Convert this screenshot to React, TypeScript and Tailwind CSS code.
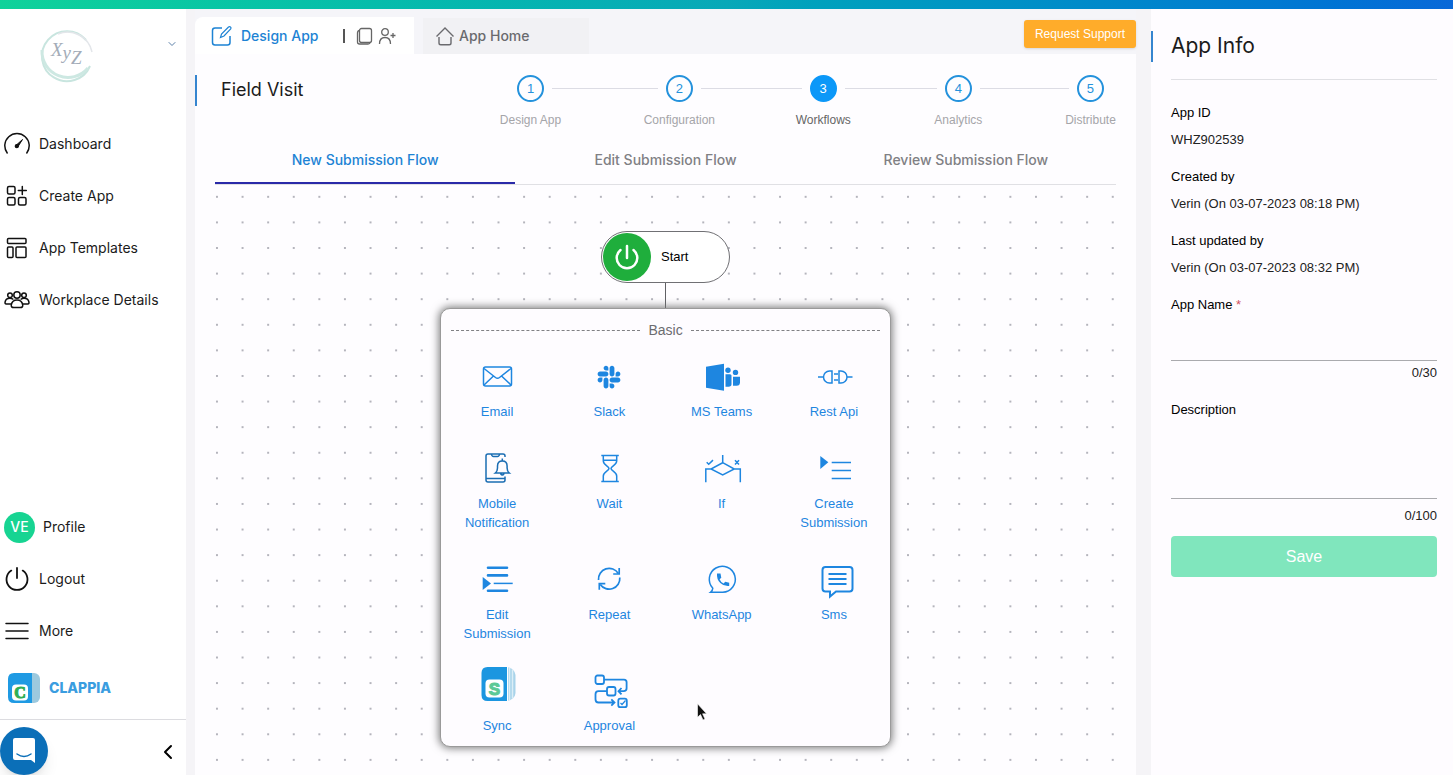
import clsx from "clsx";
import React, { useState } from "react";
import { FaSlack } from "react-icons/fa";
import { ChevronDown, ChevronLeft } from "lucide-react";

type IconProps = { children: React.ReactNode; className?: string };

// 40x40 line icon used in the workflow step picker
function StepIcon({ children, className }: IconProps) {
  return (
    <svg
      viewBox="0 0 40 40"
      fill="none"
      stroke="currentColor"
      strokeWidth="1.5"
      className={clsx("size-10 overflow-visible", className)}
    >
      {children}
    </svg>
  );
}

function NavIcon({ children }: IconProps) {
  return (
    <svg
      viewBox="0 0 26 26"
      fill="none"
      stroke="#111"
      strokeWidth="1.5"
      strokeLinecap="round"
      strokeLinejoin="round"
      className="size-[26px] shrink-0"
    >
      {children}
    </svg>
  );
}

const mainNav = [
  {
    label: "Dashboard",
    icon: (
      <NavIcon>
        <path d="M3.2 22A12.2 12.2 0 1 1 22.8 22" />
        <path d="M12.2 14.2 18.5 8.5 14 15.6z" fill="#111" strokeWidth="1" />
        <circle cx="12.8" cy="15.2" r="1.4" fill="#111" />
      </NavIcon>
    ),
  },
  {
    label: "Create App",
    icon: (
      <NavIcon>
        <rect x="3.5" y="3.5" width="7.5" height="7.5" rx="1.5" />
        <rect x="3.5" y="14.5" width="7.5" height="7.5" rx="1.5" />
        <rect x="14.5" y="14.5" width="7.5" height="7.5" rx="1.5" />
        <path d="M18.3 3.5v8M14.3 7.5h8" />
      </NavIcon>
    ),
  },
  {
    label: "App Templates",
    icon: (
      <NavIcon>
        <rect x="3.5" y="3.5" width="18.5" height="5" rx="1" />
        <rect x="3.5" y="12" width="5.5" height="10.5" rx="1" />
        <rect x="12" y="12" width="10" height="10.5" rx="1" />
      </NavIcon>
    ),
  },
  {
    label: "Workplace Details",
    icon: (
      <NavIcon>
        <circle cx="13" cy="8" r="3.2" />
        <circle cx="6" cy="8.3" r="2.3" />
        <circle cx="20" cy="8.3" r="2.3" />
        <path d="M9.8 20.5c-2 0-2.8-.8-2.5-2.6.5-3 2.4-4.9 5.7-4.9s5.2 1.9 5.7 4.9c.3 1.8-.5 2.6-2.5 2.6z" />
        <path d="M7 17H2.3c-1.3 0-1.4-.9-1.2-2 .4-2.4 2-3.7 4.9-3.7 1.2 0 2.1.3 2.9.8M19 17h4.7c1.3 0 1.4-.9 1.2-2-.4-2.4-2-3.7-4.9-3.7-1.2 0-2.1.3-2.9.8" />
      </NavIcon>
    ),
  },
];

const accountNav = [
  {
    label: "Logout",
    icon: (
      <NavIcon>
        <path d="M7.3 4.6A10.5 10.5 0 1 0 18.7 4.6M13 2v10" strokeWidth="1.8" />
      </NavIcon>
    ),
  },
  {
    label: "More",
    icon: (
      <NavIcon>
        <path d="M2 5.5h22M2 13h22M2 20.5h22" />
      </NavIcon>
    ),
  },
];

const stages = [
  { label: "Design App", line: "grow-[108]" },
  { label: "Configuration", line: "grow-[103]" },
  { label: "Workflows", line: "grow-[94]" },
  { label: "Analytics", line: "grow-[91]" },
  { label: "Distribute", line: "" },
];

const flows = ["New Submission Flow", "Edit Submission Flow", "Review Submission Flow"];

const steps = [
  {
    label: "Email",
    icon: (
      <StepIcon>
        <rect x="6.5" y="10" width="28" height="19" rx="2" />
        <path d="M7 11.5 18.5 20.5q2 1.6 4 0L34 11.5M7 28 16.5 19M34 28 24.5 19" />
      </StepIcon>
    ),
  },
  {
    label: "Slack",
    icon: (
      <span className="flex size-10 items-center justify-center">
        <FaSlack className="size-[26px]" />
      </span>
    ),
  },
  {
    label: "MS Teams",
    icon: (
      <StepIcon>
        <g fill="currentColor" stroke="none">
          <path d="M4 9.7 22 6.7V33.7L4 30.7z" />
          <circle cx="26" cy="13.3" r="2.7" />
          <circle cx="33.5" cy="15.4" r="2.7" />
          <path d="M23.5 17.2H28q1.5 0 1.5 1.5V27q0 2.8-3 2.8h-3z" />
          <path d="M31 19.7h7v5.5q0 3.5-3.5 3.5H31z" />
        </g>
      </StepIcon>
    ),
  },
  {
    label: "Rest Api",
    icon: (
      <StepIcon>
        <path d="M4 20h5.500M33 20h5.500M18 14v12h-2.500a6 6 0 0 1 0-12zM25 14v12h2a6 6 0 0 0 0-12zM20 17h4M20 23h4" />
      </StepIcon>
    ),
  },
  {
    label: "Mobile Notification",
    icon: (
      <StepIcon className="text-[#1b6db3]">
        <path d="M28 8V7q0-2-2-2H11Q9 5 9 7v24q0 2 2 2h15q2 0 2-2v-3.500M9 29.500h19" />
        <path d="M14.500 5q.3 2.500 2 2.500h4q1.700 0 2-2.500M25.300 12v-2.500" />
        <path d="M18.300 24q2.200-1.800 2.200-5v-2q0-5 4.800-5t4.800 5v2q0 3.200 2.200 5zM23.500 24.500q1.800 3 3.600 0" />
      </StepIcon>
    ),
  },
  {
    label: "Wait",
    icon: (
      <StepIcon>
        <path d="M12.300 6.500h17.500M12.300 32.500h17.500M14.300 6.500v5.500c0 4 5.700 5.200 5.700 7.500s-5.700 3.500-5.700 7.500v5.500M27.700 6.500v5.500c0 4-5.700 5.200-5.700 7.500s5.700 3.500 5.700 7.500v5.500M14.300 11.300h13.400" />
      </StepIcon>
    ),
  },
  {
    label: "If",
    icon: (
      <StepIcon>
        <path d="M20.700 6v7.700L9 20l11.700 6 11.600-6-11.600-6.300M9 20H3.800v13.300M32.300 20h6v13.300" />
        <path d="m4.700 13.300 2 2 4.300-4.200M33 11.300l4 4.200M37 11.300l-4 4.200" />
      </StepIcon>
    ),
  },
  {
    label: "Create Submission",
    icon: (
      <StepIcon>
        <path d="M6.300 7 14.300 13.300 6.300 20z" fill="currentColor" stroke="none" />
        <path d="M17.700 13.500H37M17.700 21.500H37M17.700 29.500H37" />
      </StepIcon>
    ),
  },
  {
    label: "Edit Submission",
    icon: (
      <StepIcon>
        <path d="M5.700 17 14 23.400 5.700 30z" fill="currentColor" stroke="none" />
        <path d="M11 7.700h19M11 15.400h19M11 30.700h19" strokeWidth="2.6" strokeLinecap="round" />
        <path d="M16.700 23.400h19" />
      </StepIcon>
    ),
  },
  {
    label: "Repeat",
    icon: (
      <StepIcon>
        <path
          d="M9.500 20A10.700 10.700 0 0 1 29.300 13.500M30.800 17.500A10.700 10.700 0 0 1 11.300 24.500"
          strokeWidth="1.7"
        />
        <path d="M30.200 8v6h-6M10.300 29.700v-6h6" strokeWidth="1.7" />
      </StepIcon>
    ),
  },
  {
    label: "WhatsApp",
    icon: (
      <StepIcon>
        <path d="M10.800 28.200A13 13 0 1 1 20.700 32.300H8.500q2.200-1.800 2.300-4.100z" />
        <path
          d="M15 13.500h3.500l.8 4.300-1.700 1.400q1 2.900 4 4.200l1.600-1.600 4 .9v3.300q-5.300.6-8.900-3-3.800-3.500-3.300-9.500z"
          fill="currentColor"
          stroke="none"
        />
      </StepIcon>
    ),
  },
  {
    label: "Sms",
    icon: (
      <StepIcon>
        <path
          d="M11.500 7h24q3 0 3 3v18.500q0 3-3 3H22l-6 5v-5h-4.500q-3 0-3-3V10q0-3 3-3z"
          strokeWidth="2"
        />
        <path d="M14.500 14h18M14.500 19h18M14.500 24h18" strokeWidth="2" />
      </StepIcon>
    ),
  },
  {
    label: "Sync",
    icon: (
      <StepIcon>
        <g stroke="none">
          <path d="M30-4q8 2 8.500 8v18q-.5 6-8.500 8z" fill="#a9d3ea" />
          <path d="M32.500-3.500v33M35.500-1.500v29" stroke="#dceef7" />
          <path d="M10.500-4H30V30H10.500q-6 0-6-6V2q0-6 6-6z" fill="#1c96e0" />
          <path d="M30.500-4v34" stroke="#fff" strokeWidth="1" />
          <rect x="8.5" y="8.5" width="18" height="18" rx="4" fill="#fff" />
          <text
            x="17.5"
            y="24"
            textAnchor="middle"
            fill="#5cc996"
            stroke="#5cc996"
            strokeWidth="1"
            fontSize="19"
            className="font-['Liberation_Mono',monospace] font-bold"
          >
            S
          </text>
        </g>
      </StepIcon>
    ),
  },
  {
    label: "Approval",
    icon: (
      <StepIcon>
        <g strokeWidth="1.8">
          <rect x="6.5" y="4.5" width="8.5" height="8.5" rx="2" />
          <rect x="18" y="16" width="8.5" height="8.5" rx="2" />
          <rect x="29.3" y="27.7" width="8.5" height="8.5" rx="2" />
          <path d="M15 8.700h20q2.600 0 2.600 2.600v6q0 2.900-3 2.900h-5M32.500 17l-3 3.200 3 3.200" />
          <path d="M18 20.200H9.500q-3 0-3 3v5q0 3.300 3 3.300h16M22.300 28.300l3.200 3.200-3.200 3.200" />
          <path d="m31.500 32 1.500 1.500 3.500-4" strokeWidth="1.2" />
        </g>
      </StepIcon>
    ),
  },
];

function Sidebar() {
  return (
    <aside className="relative flex w-[186px] shrink-0 flex-col bg-white font-[Inter,sans-serif] text-sm text-[#1b1b1b]">
      <div className="flex items-start justify-between pt-[19px] pr-2 pl-[38px]">
        <svg viewBox="0 0 58 58" className="size-[58px]" fill="none">
          <path d="M52 38A25 25 0 1 1 48 12" stroke="#c8e5df" strokeWidth="2" />
          <path d="M50 40A26 26 0 0 1 4 22" stroke="#cde8e2" strokeWidth="3" />
          <path d="M20 6A25 25 0 0 1 54 24" stroke="#e3e6ea" strokeWidth="1.5" />
          <text
            x="13"
            y="28"
            fontSize="19"
            fill="#a3acb8"
            className="font-['Liberation_Serif',serif] italic"
          >
            X<tspan dy="3">y</tspan>
            <tspan dy="5">Z</tspan>
          </text>
        </svg>
        <button aria-label="Switch workplace" className="mt-[10px]">
          <ChevronDown className="size-3 text-[#5b7fa8]" />
        </button>
      </div>
      <nav className="mt-8 flex flex-col">
        {mainNav.map(({ label, icon }) => (
          <a key={label} href="#" className="flex h-[52px] items-center gap-[9px] pl-1">
            {icon}
            {label}
          </a>
        ))}
      </nav>
      <nav className="mt-auto flex flex-col">
        <a href="#" className="flex h-[52px] items-center gap-2 pl-1">
          <span className="flex size-[31px] items-center justify-center rounded-full bg-[#17d492] font-medium text-white">
            VE
          </span>
          Profile
        </a>
        {accountNav.map(({ label, icon }) => (
          <a key={label} href="#" className="flex h-[52px] items-center gap-[9px] pl-1">
            {icon}
            {label}
          </a>
        ))}
        <a
          href="#"
          className="flex h-[62px] items-center gap-[9px] pl-2 text-sm font-extrabold text-[#3a9de0]"
        >
          <svg viewBox="0 0 32 32" className="size-8">
            <rect x="8" y="1" width="24" height="30" rx="6" fill="#9cc9de" />
            <path d="M6 1h18v30H6q-6 0-6-6V7q0-6 6-6z" fill="#1f9ae3" />
            <rect x="4" y="12.5" width="16" height="16" rx="4" fill="#fff" />
            <text
              x="12"
              y="26"
              textAnchor="middle"
              fontSize="16"
              fill="#2fae55"
              stroke="#2fae55"
              className="font-['Liberation_Serif',serif] font-bold"
            >
              C
            </text>
          </svg>
          CLAPPIA
        </a>
      </nav>
      <div className="flex h-14 items-center justify-end border-t border-[#dcdce0] pt-2 pr-[6px]">
        <button aria-label="Collapse sidebar">
          <ChevronLeft className="size-6 text-black" />
        </button>
      </div>
      <button
        aria-label="Open chat"
        className="absolute bottom-0 left-0 flex size-12 items-center justify-center rounded-full bg-[#0b6fb8] shadow-lg"
      >
        <svg viewBox="0 0 24 26" className="h-[26px] w-6">
          <path d="M3 0h18q2 0 2 2v23l-4-3H3q-2 0-2-2V2q0-2 2-2z" fill="#fff" />
          <path d="M5 16q7 5 14 0" fill="none" stroke="#0b6fb8" strokeWidth="1.5" strokeLinecap="round" />
        </svg>
      </button>
    </aside>
  );
}

function TabBar() {
  return (
    <div className="flex bg-[#f5f5f9] font-[Inter,sans-serif] text-sm font-medium">
      <div className="mt-2 flex h-[37px] w-[219px] items-center rounded-tl-lg bg-white pl-4">
        <a href="#" className="flex items-center gap-2 text-[#1d83d4]">
          <svg viewBox="0 0 22 22" className="size-[22px]" fill="none" stroke="currentColor" strokeWidth="1.5">
            <path d="M11 3H4Q1.500 3 1.500 5.500v12Q1.500 20 4 20h12.500q2.500 0 2.500-2.500V11" />
            <path d="M9.500 12.500 10.500 9 17.500 2q1-.7 2 0t.2 2L13 11z" strokeWidth="1.2" />
          </svg>
          Design App
        </a>
        <span className="ml-[25px] h-[14px] w-[2px] bg-[#555]" />
        <button aria-label="Duplicate app" className="ml-[10px] text-[#666]">
          <svg viewBox="0 0 18 18" className="size-[18px]" fill="none" stroke="currentColor" strokeWidth="1.3">
            <rect x="4.5" y="1.5" width="12" height="14" rx="2" />
            <path d="M4.500 3.500Q2.500 3.500 2.500 6v9q0 2 2 2h8.500q2 0 2.200-1.500" />
          </svg>
        </button>
        <button aria-label="Share app" className="ml-1 text-[#666]">
          <svg viewBox="0 0 20 18" className="h-[18px] w-5" fill="none" stroke="currentColor" strokeWidth="1.3">
            <circle cx="8" cy="5" r="3.3" />
            <path d="M2.500 17q0-6.500 5.500-6.500t5.500 6.500M16 6v5M13.500 8.500h5" />
          </svg>
        </button>
      </div>
      <a
        href="#"
        className="mt-[9px] ml-[9px] flex h-9 w-[166px] items-center gap-1 bg-[#f1f1f4] pl-3 text-[#6a6a6e]"
      >
        <svg viewBox="0 0 20 20" className="size-5" fill="none" stroke="currentColor" strokeWidth="1.4">
          <path d="M1.500 10.500 10 2l8.500 8.500M4 11v6q0 1.800 1.800 1.800h8.400Q16 18.800 16 17v-6" />
        </svg>
        App Home
      </a>
      <button className="mt-[11px] ml-auto h-7 rounded-[3px] bg-[#ffac2a] px-[11px] font-['Liberation_Sans',sans-serif] text-xs font-normal text-white shadow-sm">
        Request Support
      </button>
    </div>
  );
}

function Stepper() {
  return (
    <ol className="flex flex-1 items-start pr-8">
      {stages.map(({ label, line }, i) => {
        const active = i === 2;
        return (
          <React.Fragment key={label}>
            <li className="flex w-[27px] shrink-0 flex-col items-center gap-[10px]">
              <span
                className={clsx(
                  "flex size-[27px] items-center justify-center rounded-full border-2 text-[13px]",
                  active
                    ? "border-[#0c98f8] bg-[#0c98f8] text-white"
                    : "border-[#2492dc] text-[#2492dc]"
                )}
              >
                {i + 1}
              </span>
              <span
                className={clsx(
                  "text-xs leading-4 whitespace-nowrap",
                  active ? "text-[#666]" : "text-[#a5a5a9]"
                )}
              >
                {label}
              </span>
            </li>
            {line && (
              <li aria-hidden className={clsx("mx-2 mt-[13px] h-px basis-0 bg-[#dcdce4]", line)} />
            )}
          </React.Fragment>
        );
      })}
    </ol>
  );
}

function StepPicker() {
  return (
    <div className="relative w-[451px] rounded-[10px] border border-[#9a9a9a] bg-[#fefcff] pb-[11px] shadow-[0_0_8px_1px_#777]">
      <div className="mt-[11px] flex h-5 items-center gap-2 px-[10px] text-sm text-[#6c6c70]">
        <span className="flex-1 border-t border-dashed border-[#808084]" />
        Basic
        <span className="flex-1 border-t border-dashed border-[#808084]" />
      </div>
      <div className="mt-[17px] grid grid-cols-4 gap-y-7 text-[13px] leading-[19px] text-[#1e86e0]">
        {steps.map(({ label, icon }) => (
          <button key={label} className="flex flex-col items-center gap-[5px]">
            {icon}
            <span className="w-20">{label}</span>
          </button>
        ))}
      </div>
      <svg
        viewBox="0 0 12 18"
        className="absolute right-[182px] bottom-[25px] h-[18px] w-3"
        fill="#111"
        stroke="#fff"
        strokeWidth=".6"
      >
        <path d="M1.500.8v13.500l3-2.800 2.500 5.500 2-1-2.400-5.200h4z" />
      </svg>
    </div>
  );
}

function AppInfo() {
  const [name, setName] = useState("");
  const [description, setDescription] = useState("");
  const details = [
    ["App ID", "WHZ902539"],
    ["Created by", "Verin (On 03-07-2023 08:18 PM)"],
    ["Last updated by", "Verin (On 03-07-2023 08:32 PM)"],
  ];

  return (
    <aside className="w-[302px] shrink-0 bg-[#fefcff] pr-4 text-[13px] leading-5 text-[#222]">
      <h2 className="mt-[22px] flex h-[31px] items-center border-l-2 border-[#3585cf] pb-[2px] pl-[18px] font-[Inter,sans-serif] text-[21px] text-[#1b1b1b]">
        App Info
      </h2>
      <div className="mt-[17px] ml-5 border-t border-[#e0e0e4]">
        <dl className="mt-[23px]">
          {details.map(([term, value]) => (
            <div key={term} className="mb-[17px]">
              <dt className="text-black">{term}</dt>
              <dd className="mt-[7px]">{value}</dd>
            </div>
          ))}
        </dl>
        <form onSubmit={(e) => e.preventDefault()}>
          <label htmlFor="app-name" className="block text-black">
            App Name <span className="text-[#d05060]">*</span>
          </label>
          <input
            id="app-name"
            maxLength={30}
            value={name}
            onChange={(e) => setName(e.target.value)}
            className="block h-[46px] w-full border-b border-[#aaaaae] outline-none"
          />
          <p className="mt-[2px] text-right">{name.length}/30</p>
          <label htmlFor="description" className="mt-[17px] block text-black">
            Description
          </label>
          <textarea
            id="description"
            maxLength={100}
            value={description}
            onChange={(e) => setDescription(e.target.value)}
            className="block h-[79px] w-full resize-none border-b border-[#aaaaae] outline-none"
          />
          <p className="mt-[7px] text-right">{description.length}/100</p>
          <button className="mt-[10px] h-[41px] w-full rounded-[4px] bg-[#80e6bd] text-base text-white">
            Save
          </button>
        </form>
      </div>
    </aside>
  );
}

export default function App() {
  const [flow, setFlow] = useState(flows[0]);

  return (
    <div className="flex min-h-screen flex-col bg-[#f5f4f7] font-['Liberation_Sans',Arial,sans-serif]">
      <div className="h-[9px] bg-linear-to-r from-[#10d29a] via-[#08a8b8] to-[#0a68d8]" />
      <div className="flex flex-1">
        <Sidebar />
        <main className="mr-[15px] ml-[9px] flex min-w-0 flex-1 flex-col bg-[#fefdff]">
          <TabBar />
          <div className="mt-[21px] flex">
            <h1 className="flex h-[31px] w-[322px] items-center border-l-2 border-[#3585cf] pb-[2px] pl-6 font-[Inter,sans-serif] text-lg text-[#1b1b1b]">
              Field Visit
            </h1>
            <Stepper />
          </div>
          <div
            role="tablist"
            className="mx-5 mt-[6px] grid grid-cols-3 border-b border-[#e0e0e4] font-[Inter,sans-serif] text-sm font-medium"
          >
            {flows.map((name) => (
              <button
                key={name}
                role="tab"
                aria-selected={flow === name}
                onClick={() => setFlow(name)}
                className={clsx(
                  "h-[50px] border-b-2 pt-1",
                  flow === name
                    ? "border-[#2a2aa8] text-[#1d83d4]"
                    : "border-transparent text-[#808084]"
                )}
              >
                {name}
              </button>
            ))}
          </div>
          <div className="mx-5 flex flex-1 flex-col items-center bg-[radial-gradient(circle_at_2px_12px,#b4b4bc_1px,transparent_1px)] bg-[length:1.6rem_1.6rem] pt-[46px] pb-7">
            <button className="flex h-[52px] w-[129px] items-center gap-[10px] rounded-full border border-[#707074] bg-white pl-px text-[13px] text-black">
              <span className="flex size-12 items-center justify-center rounded-full bg-[#1fae3c]">
                <svg viewBox="0 0 26 28" className="h-7 w-[26px]" fill="none" stroke="#fff" strokeWidth="2.5" strokeLinecap="round">
                  <path d="M6.500 7a10.300 10.300 0 1 0 13 0M13 3v12" />
                </svg>
              </span>
              Start
            </button>
            <span className="h-[25px] w-px bg-[#606064]" />
            <StepPicker />
          </div>
        </main>
        <AppInfo />
      </div>
    </div>
  );
}
